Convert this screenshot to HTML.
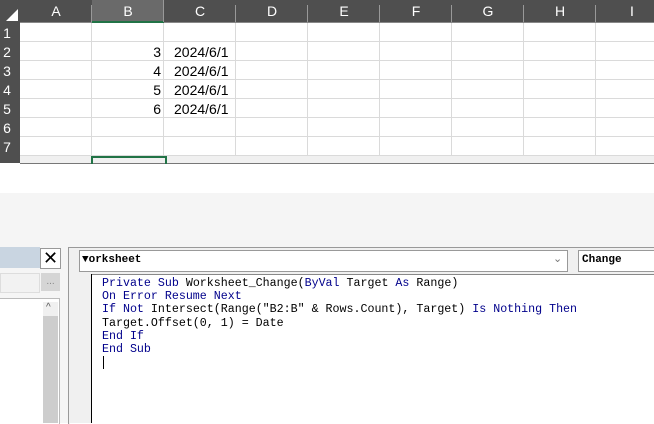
<!DOCTYPE html><html><head><style>
body{margin:0;width:654px;height:423px;overflow:hidden;background:#fff;position:relative;font-family:"Liberation Sans",sans-serif}
.a{position:absolute}
.hd{background:#4f4f4f;color:#fff;font-size:14px;text-align:center}
.code{font-family:"Liberation Mono","Noto Sans CJK SC",monospace;font-size:11.65px;line-height:13.2px;color:#000;white-space:pre}
.k{color:#00008b}
</style></head><body>
<div class="a" style="left:0;top:0;width:654px;height:163px;background:#fff"></div>
<div class="a hd" style="left:0;top:0;width:654px;height:22px;border-bottom:1px solid #888"></div>
<div class="a hd" style="left:0;top:0;width:20px;height:163px"></div>
<div class="a" style="left:6px;top:9px;width:0;height:0;border-left:12px solid transparent;border-bottom:12px solid #fff"></div>
<div class="a" style="left:92px;top:0;width:72px;height:21px;background:#6a6a6a;border-bottom:2px solid #217346"></div>
<div id="cols"></div>
<div class="a" style="left:20px;top:156px;width:634px;height:7px;background:#f0f0f0;border-bottom:1px solid #777"></div>
<div class="a" style="left:91px;top:156px;width:72px;height:6px;border:2px solid #217346;border-bottom:none"></div>
<div class="a" style="left:0;top:193px;width:654px;height:230px;background:#f5f5f5"></div>
<div class="a" style="left:0;top:247px;width:40px;height:21px;background:#c9d5e1"></div>
<div class="a" style="left:40px;top:248px;width:19px;height:19px;border:1px solid #999;background:#fff;font-size:18px;line-height:19px;text-align:center">✕</div>
<div class="a" style="left:0;top:273px;width:38px;height:18px;background:#f2f2f2;border:1px solid #ddd"></div>
<div class="a" style="left:41px;top:273px;width:19px;height:18px;background:#d5d5d5;color:#888;font-size:10px;text-align:center;line-height:18px">...</div>
<div class="a" style="left:0;top:298px;width:59px;height:125px;background:#fff;border-top:1px solid #bbb;border-right:1px solid #bbb"></div>
<div class="a" style="left:43px;top:302px;width:15px;height:121px;background:#f0f0f0"></div>
<div class="a" style="left:43px;top:316px;width:15px;height:107px;background:#cdcdcd"></div>
<div class="a" style="left:46px;top:302px;font-size:10px;color:#555">^</div>
<div class="a" style="left:68px;top:247px;width:586px;height:176px;background:#f0f0f0;border-left:1px solid #999;border-top:1px solid #999"></div>
<div class="a" style="left:79px;top:250px;width:487px;height:20px;background:#fff;border:1px solid #999"></div>
<div class="a" style="left:82px;top:254px;font:bold 11px 'Liberation Mono',monospace">▼orksheet</div>
<div class="a" style="left:553px;top:252px;font-size:11px;color:#777">⌄</div>
<div class="a" style="left:578px;top:250px;width:80px;height:20px;background:#fff;border:1px solid #999"></div>
<div class="a" style="left:582px;top:254px;font:bold 11px 'Liberation Mono',monospace">Change</div>
<div class="a" style="left:70px;top:274px;width:584px;height:149px;background:#fff;border-top:1px solid #888"></div>
<div class="a" style="left:70px;top:274px;width:21px;height:149px;background:#f0f0f0;border-right:1px solid #000"></div>
<div class="a code" style="left:102px;top:277px"><span class="k">Private Sub</span> Worksheet_Change(<span class="k">ByVal</span> Target <span class="k">As</span> Range)
<span class="k">On Error Resume Next</span>
<span class="k">If Not</span> Intersect(Range("B2:B" &amp; Rows.Count), Target) <span class="k">Is Nothing Then</span>
Target.Offset(0, 1) = Date
<span class="k">End If</span>
<span class="k">End Sub</span></div>
<div class="a" style="left:103px;top:356px;width:1px;height:13px;background:#000"></div>
<script>
var s="";var xs=[20,92,164,236,308,380,452,524,596,668],L="ABCDEFGHI";
for(var i=0;i<9;i++){s+='<div class="a" style="left:'+xs[i]+'px;top:3px;width:'+(xs[i+1]-xs[i])+'px;text-align:center;color:#fff;font-size:14px">'+L[i]+'</div>';
s+='<div class="a" style="left:'+(xs[i+1]-1)+'px;top:'+(i==1?0:5)+'px;width:1px;height:'+(i==1?22:17)+'px;background:#999"></div>';
s+='<div class="a" style="left:'+(xs[i+1]-1)+'px;top:23px;width:1px;height:133px;background:#dadada"></div>';}
var ys=[23,42,61,80,99,118,137,156];
for(var r=0;r<7;r++){s+='<div class="a" style="left:0;top:'+(ys[r]+2)+'px;width:14px;text-align:center;color:#fff;font-size:14px">'+(r+1)+'</div>';
s+='<div class="a" style="left:20px;top:'+(ys[r+1]-1)+'px;width:634px;height:1px;background:#dadada"></div>';}
for(var r=1;r<5;r++){s+='<div class="a" style="left:92px;top:'+(ys[r]+2)+'px;width:69px;text-align:right;font-size:14px">'+(r+2)+'</div>';
s+='<div class="a" style="left:174px;top:'+(ys[r]+2)+'px;font-size:14px">2024/6/1</div>';}
document.getElementById("cols").innerHTML=s;
</script>
</body></html>
